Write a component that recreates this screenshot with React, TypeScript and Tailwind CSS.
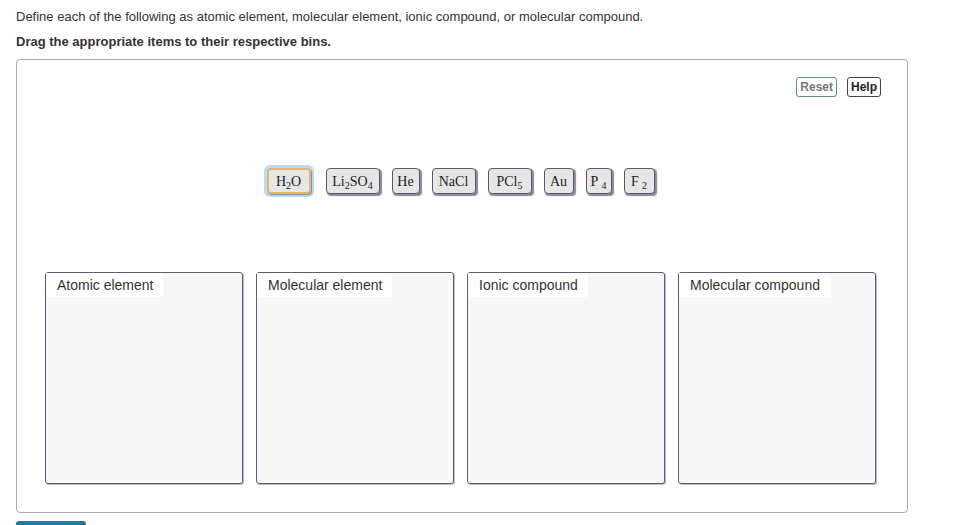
import React from "react";

const sub = "text-[10px] align-[-1px]";

const tiles: { key: string; node: React.ReactNode; w: string }[] = [
  { key: "h2o", node: <>H<sub className={sub}>2</sub>O</>, w: "w-[44px]" },
  { key: "li", node: <>Li<sub className={sub}>2</sub>SO<sub className={sub}>4</sub></>, w: "w-[54px]" },
  { key: "he", node: <>He</>, w: "w-[28px]" },
  { key: "nacl", node: <>NaCl</>, w: "w-[44px]" },
  { key: "pcl", node: <>PCl<sub className={sub}>5</sub></>, w: "w-[44px]" },
  { key: "au", node: <>Au</>, w: "w-[30px]" },
  { key: "p4", node: <>P<sub className="text-[10px] align-[-1px] ml-[3px]">4</sub></>, w: "w-[26px]" },
  { key: "f2", node: <>F<sub className="text-[10px] align-[-1px] ml-[3px]">2</sub></>, w: "w-[31px]" },
];

const bins = ["Atomic element", "Molecular element", "Ionic compound", "Molecular compound"];

export default function App() {
  return (
    <div className="w-[961px] h-[525px] overflow-hidden bg-white px-4 pt-[9px] text-[#333] [font-family:'Liberation_Sans',Arial,sans-serif]">
      <p className="text-[13px] leading-[15px]">
        Define each of the following as atomic element, molecular element, ionic compound, or molecular compound.
      </p>
      <p className="mt-[10px] text-[13px] leading-[15px] font-bold">Drag the appropriate items to their respective bins.</p>
      <div className="mt-[10px] w-[892px] h-[454px] border border-[#aaa] rounded-[4px] flex flex-col">
        <div className="flex justify-end gap-[10px] pt-[17px] pr-[26px]">
          <button className="h-[20px] px-[3px] border border-[#6a8a98] rounded-[3px] text-[12px] leading-[16px] text-[#777] font-bold bg-white">
            Reset
          </button>
          <button className="h-[20px] px-[3px] border border-[#444] rounded-[3px] text-[12px] leading-[16px] text-[#222] font-bold bg-white">
            Help
          </button>
        </div>
        <div className="mt-[68px] flex justify-center items-center gap-[12px] pr-[6px] [font-family:'Liberation_Serif','Times_New_Roman',serif]">
          {tiles.map((t, i) =>
            i === 0 ? (
              <div key={t.key} className="p-[3px] rounded-[6px] bg-[#b5dcfa]">
                <div className={`${t.w} h-[26px] flex items-center justify-center rounded-[4px] border-2 border-[#e3b56e] bg-[#e6e6e6] text-[14px] text-[#222] shadow-[1px_1px_1px_rgba(0,0,0,0.35)]`}>
                  <span>{t.node}</span>
                </div>
              </div>
            ) : (
              <div
                key={t.key}
                className={`${t.w} h-[26px] flex items-center justify-center rounded-[4px] border border-[#5a5870] bg-[#e6e6e6] text-[14px] text-[#222] shadow-[1.5px_1.5px_1px_rgba(40,40,70,0.55)]`}
              >
                <span>{t.node}</span>
              </div>
            )
          )}
        </div>
        <div className="mt-[75px] flex gap-[13px] pl-[28px]">
          {bins.map((b) => (
            <div key={b} className="w-[198px] h-[212px] border border-[#5f5c7a] rounded-[3px] bg-[#f7f7f7] shadow-[1px_1px_0_rgba(60,60,90,0.35)]">
              <div className="inline-block bg-white pl-[11px] pr-[10px] pt-[4px] pb-[4px] text-[14px] leading-[16px] text-[#333]">{b}</div>
            </div>
          ))}
        </div>
      </div>
      <div className="mt-[8px] w-[70px] h-[10px] rounded-t-[3px] bg-[#1d7ba3]" />
    </div>
  );
}
